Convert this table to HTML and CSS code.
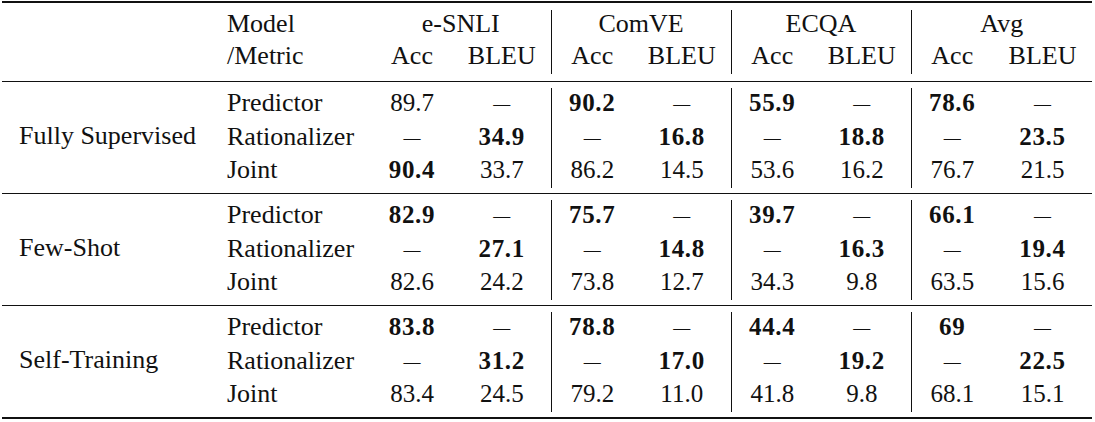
FILE: index.html
```html
<!DOCTYPE html>
<html lang="en">

<head>
    <meta charset="UTF-8">
    <title>Results</title>
    <link rel="stylesheet" href="styles.css">
</head>

<body>
    <table class="results">
        <colgroup>
            <col class="col-setting">
            <col class="col-model">
            <col class="col-acc"><col class="col-bleu">
            <col class="col-acc"><col class="col-bleu">
            <col class="col-acc"><col class="col-bleu">
            <col class="col-acc"><col class="col-bleu-last">
        </colgroup>
        <thead>
            <tr class="gap-head-top"><td colspan="10"></td></tr>
            <tr class="head">
                <th></th>
                <th class="model">Model</th>
                <th colspan="2">e-SNLI</th>
                <th colspan="2" class="sep">ComVE</th>
                <th colspan="2" class="sep">ECQA</th>
                <th colspan="2" class="sep">Avg</th>
            </tr>
            <tr class="head">
                <th></th>
                <th class="model">/Metric</th>
                <th>Acc</th><th>BLEU</th>
                <th class="sep">Acc</th><th>BLEU</th>
                <th class="sep">Acc</th><th>BLEU</th>
                <th class="sep">Acc</th><th>BLEU</th>
            </tr>
            <tr class="gap-head-bottom"><td colspan="10"></td></tr>
        </thead>

        <!-- Fully supervised -->
        <tbody>
            <tr class="gap"><td colspan="10"></td></tr>
            <tr class="row first">
                <td rowspan="3" class="setting">Fully Supervised</td>
                <td class="model">Predictor</td>
                <td class="num">89.7</td><td class="num"><span class="dash">—</span></td>
                <td class="num sep best">90.2</td><td class="num"><span class="dash">—</span></td>
                <td class="num sep best">55.9</td><td class="num"><span class="dash">—</span></td>
                <td class="num sep best">78.6</td><td class="num"><span class="dash">—</span></td>
            </tr>
            <tr class="row">
                <td class="model">Rationalizer</td>
                <td class="num"><span class="dash">—</span></td><td class="num best">34.9</td>
                <td class="num sep"><span class="dash">—</span></td><td class="num best">16.8</td>
                <td class="num sep"><span class="dash">—</span></td><td class="num best">18.8</td>
                <td class="num sep"><span class="dash">—</span></td><td class="num best">23.5</td>
            </tr>
            <tr class="row">
                <td class="model">Joint</td>
                <td class="num best">90.4</td><td class="num">33.7</td>
                <td class="num sep">86.2</td><td class="num">14.5</td>
                <td class="num sep">53.6</td><td class="num">16.2</td>
                <td class="num sep">76.7</td><td class="num">21.5</td>
            </tr>
            <tr class="gap-end"><td colspan="10"></td></tr>
        </tbody>

        <!-- Few-shot -->
        <tbody>
            <tr class="gap"><td colspan="10"></td></tr>
            <tr class="row first">
                <td rowspan="3" class="setting">Few-Shot</td>
                <td class="model">Predictor</td>
                <td class="num best">82.9</td><td class="num"><span class="dash">—</span></td>
                <td class="num sep best">75.7</td><td class="num"><span class="dash">—</span></td>
                <td class="num sep best">39.7</td><td class="num"><span class="dash">—</span></td>
                <td class="num sep best">66.1</td><td class="num"><span class="dash">—</span></td>
            </tr>
            <tr class="row">
                <td class="model">Rationalizer</td>
                <td class="num"><span class="dash">—</span></td><td class="num best">27.1</td>
                <td class="num sep"><span class="dash">—</span></td><td class="num best">14.8</td>
                <td class="num sep"><span class="dash">—</span></td><td class="num best">16.3</td>
                <td class="num sep"><span class="dash">—</span></td><td class="num best">19.4</td>
            </tr>
            <tr class="row">
                <td class="model">Joint</td>
                <td class="num">82.6</td><td class="num">24.2</td>
                <td class="num sep">73.8</td><td class="num">12.7</td>
                <td class="num sep">34.3</td><td class="num">9.8</td>
                <td class="num sep">63.5</td><td class="num">15.6</td>
            </tr>
            <tr class="gap-end"><td colspan="10"></td></tr>
        </tbody>

        <!-- Self-training -->
        <tbody>
            <tr class="gap"><td colspan="10"></td></tr>
            <tr class="row first">
                <td rowspan="3" class="setting">Self-Training</td>
                <td class="model">Predictor</td>
                <td class="num best">83.8</td><td class="num"><span class="dash">—</span></td>
                <td class="num sep best">78.8</td><td class="num"><span class="dash">—</span></td>
                <td class="num sep best">44.4</td><td class="num"><span class="dash">—</span></td>
                <td class="num sep best">69</td><td class="num"><span class="dash">—</span></td>
            </tr>
            <tr class="row">
                <td class="model">Rationalizer</td>
                <td class="num"><span class="dash">—</span></td><td class="num best">31.2</td>
                <td class="num sep"><span class="dash">—</span></td><td class="num best">17.0</td>
                <td class="num sep"><span class="dash">—</span></td><td class="num best">19.2</td>
                <td class="num sep"><span class="dash">—</span></td><td class="num best">22.5</td>
            </tr>
            <tr class="row">
                <td class="model">Joint</td>
                <td class="num">83.4</td><td class="num">24.5</td>
                <td class="num sep">79.2</td><td class="num">11.0</td>
                <td class="num sep">41.8</td><td class="num">9.8</td>
                <td class="num sep">68.1</td><td class="num">15.1</td>
            </tr>
            <tr class="gap-end"><td colspan="10"></td></tr>
        </tbody>
    </table>
</body>

</html>
```

FILE: styles.css
```css
body {
    margin: 0;
    padding: 1px 2px 0 2px;
    background: #ffffff;
    color: #111111;
}

.results {
    width: 1090px;
    table-layout: fixed;
    border-collapse: collapse;
    border-top: 2px solid #111111;
    border-bottom: 2px solid #111111;
    font-family: "Liberation Serif", serif;
    font-size: 26px;
}

.col-setting {
    width: 213px;
}

.col-model {
    width: 156px;
}

.col-acc {
    width: 82px;
}

.col-bleu {
    width: 98px;
}

.col-bleu-last {
    width: 99px;
}

.results th,
.results td {
    padding: 0;
    line-height: 28px;
    vertical-align: top;
    text-align: center;
    font-weight: normal;
    white-space: nowrap;
}

.results tbody {
    border-top: 1px solid #111111;
}

/* spacing around the rules, no vertical lines here */
.gap-head-top td,
.gap-head-bottom td {
    height: 7px;
    line-height: 0;
    font-size: 0;
}

.gap td {
    height: 6px;
    line-height: 0;
    font-size: 0;
}

.gap-end td {
    height: 5px;
    line-height: 0;
    font-size: 0;
}

.head th {
    height: 28px;
    padding-bottom: 4px;
}

.row td {
    height: 28px;
    padding-top: 1px;
    padding-bottom: 4px;
}

.row.first td {
    padding-bottom: 5px;
}

.results .model {
    text-align: left;
    padding-left: 12px;
}

.results .setting {
    text-align: left;
    padding-left: 17px;
    vertical-align: middle;
}

.results .sep {
    border-left: 1px solid #111111;
}

.results .num {
    font-size: 25px;
}

.results .best {
    font-weight: bold;
    letter-spacing: 0.7px;
}

.dash {
    font-size: 17px;
    font-weight: normal;
    letter-spacing: 0;
    line-height: 0;
    vertical-align: 2px;
}
```
